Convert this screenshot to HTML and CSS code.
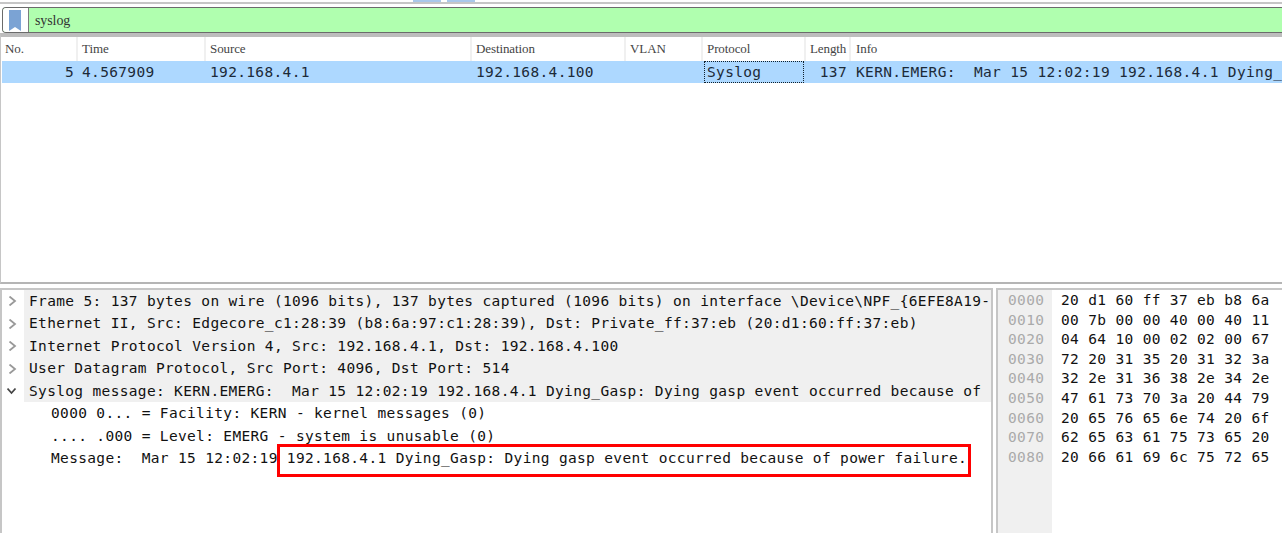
FILE: index.html
```html
<!DOCTYPE html>
<html lang="en">
<head>
<meta charset="utf-8">
<title>Wireshark syslog</title>
<link rel="stylesheet" href="styles.css">
</head>
<body>
<div class="app">
  <div class="topstrip">
    <div class="tabs"><span class="tab"></span><span class="tab"></span></div>
    <div class="topline"></div>
  </div>
  <div class="filter">
    <div class="bookmark">
      <svg class="bm-icon" width="12" height="21" viewBox="0 0 12 21"><path d="M0 0H12V21L6 17L0 21Z" fill="#7ba3d4"/></svg>
    </div>
    <div class="filter-text">syslog</div>
  </div>
  <div class="packets">
    <div class="cols">
      <div class="c c-no">No.</div>
      <div class="c c-time">Time</div>
      <div class="c c-src">Source</div>
      <div class="c c-dst">Destination</div>
      <div class="c c-vlan">VLAN</div>
      <div class="c c-proto">Protocol</div>
      <div class="c c-len">Length</div>
      <div class="c c-info">Info</div>
    </div>
    <div class="row">
      <div class="v c-no num">5</div>
      <div class="v c-time">4.567909</div>
      <div class="v c-src">192.168.4.1</div>
      <div class="v c-dst">192.168.4.100</div>
      <div class="v c-vlan"></div>
      <div class="v c-proto"><div class="focus">Syslog</div></div>
      <div class="v c-len num">137</div>
      <div class="v c-info info-v">KERN.EMERG:  Mar 15 12:02:19 192.168.4.1 Dying_</div>
    </div>
  </div>
  <div class="bottom">
    <div class="tree">
      <div class="t top"><span class="arrow"><svg width="10" height="10" viewBox="0 0 10 10"><path d="M2.5 0.5L8 5L2.5 9.5" class="chev"/></svg></span><span class="tx">Frame 5: 137 bytes on wire (1096 bits), 137 bytes captured (1096 bits) on interface \Device\NPF_{6EFE8A19-</span></div>
      <div class="t top"><span class="arrow"><svg width="10" height="10" viewBox="0 0 10 10"><path d="M2.5 0.5L8 5L2.5 9.5" class="chev"/></svg></span><span class="tx">Ethernet II, Src: Edgecore_c1:28:39 (b8:6a:97:c1:28:39), Dst: Private_ff:37:eb (20:d1:60:ff:37:eb)</span></div>
      <div class="t top"><span class="arrow"><svg width="10" height="10" viewBox="0 0 10 10"><path d="M2.5 0.5L8 5L2.5 9.5" class="chev"/></svg></span><span class="tx">Internet Protocol Version 4, Src: 192.168.4.1, Dst: 192.168.4.100</span></div>
      <div class="t top"><span class="arrow"><svg width="10" height="10" viewBox="0 0 10 10"><path d="M2.5 0.5L8 5L2.5 9.5" class="chev"/></svg></span><span class="tx">User Datagram Protocol, Src Port: 4096, Dst Port: 514</span></div>
      <div class="t top"><span class="arrow"><svg width="10" height="10" viewBox="0 0 10 10"><path d="M0.5 2.5L4.5 7L8.5 2.5" class="chev dark"/></svg></span><span class="tx">Syslog message: KERN.EMERG:  Mar 15 12:02:19 192.168.4.1 Dying_Gasp: Dying gasp event occurred because of</span></div>
      <div class="t sub"><span class="tx">0000 0... = Facility: KERN - kernel messages (0)</span></div>
      <div class="t sub"><span class="tx">.... .000 = Level: EMERG - system is unusable (0)</span></div>
      <div class="t sub"><span class="tx">Message:  Mar 15 12:02:19 192.168.4.1 Dying_Gasp: Dying gasp event occurred because of power failure.</span></div>
      <div class="redbox"></div>
    </div>
    <div class="hex">
      <div class="offsets">
        <div>0000</div><div>0010</div><div>0020</div><div>0030</div><div>0040</div><div>0050</div><div>0060</div><div>0070</div><div>0080</div>
      </div>
      <div class="bytes">
        <div>20 d1 60 ff 37 eb b8 6a</div>
        <div>00 7b 00 00 40 00 40 11</div>
        <div>04 64 10 00 02 02 00 67</div>
        <div>72 20 31 35 20 31 32 3a</div>
        <div>32 2e 31 36 38 2e 34 2e</div>
        <div>47 61 73 70 3a 20 44 79</div>
        <div>20 65 76 65 6e 74 20 6f</div>
        <div>62 65 63 61 75 73 65 20</div>
        <div>20 66 61 69 6c 75 72 65</div>
      </div>
    </div>
  </div>
</div>
</body>
</html>
```
FILE: styles.css
```css
html, body { margin: 0; padding: 0; background: #fff; }
.app { width: 1282px; height: 533px; overflow: hidden; display: flex; flex-direction: column; position: relative; }
.topstrip { height: 7px; flex: none; background: #fff; }
.tabs { height: 2px; display: flex; gap: 6px; padding-left: 413px; }
.tab { width: 28px; height: 2px; background: #a9c8ea; }
.topline { height: 2px; background: #c6c6c6; }
.filter { height: 26px; flex: none; margin-left: 2px; display: flex; box-sizing: border-box; border: 1px solid #6b6b6b; border-right: 0; border-radius: 4px 0 0 4px; background: #b0ffaf; }
.bookmark { width: 26px; flex: none; background: #fff; border-right: 1px solid #7b7b7b; box-sizing: border-box; padding: 2px 0 0 6px; border-radius: 3px 0 0 3px; }
.bm-icon { display: block; }
.filter-text { font: 14px/25px "Liberation Serif", serif; color: #333; padding-left: 6px; letter-spacing: -0.1px; }
.packets { height: 251px; flex: none; box-sizing: border-box; border-top: 4px solid #bdbdbd; border-left: 1px solid #c6c6c6; border-bottom: 2px solid #b5b5b5; }
.cols { display: flex; height: 24px; }
.c { font: 13px/23px "Liberation Serif", serif; color: #444; box-sizing: border-box; padding-left: 4px; border-right: 2px solid #f0f0f0; white-space: nowrap; letter-spacing: -0.1px; }
.c-no { width: 77px; flex: none; }
.c-time { width: 128px; flex: none; }
.c-src { width: 266px; flex: none; }
.c-dst { width: 154px; flex: none; }
.c-vlan { width: 77px; flex: none; }
.c-proto { width: 103px; flex: none; }
.c-len { width: 45px; flex: none; }
.c-info { flex: 1; min-width: 0; border-right: 0; padding-left: 5px; }
.row { display: flex; height: 22px; background: #add8ff; margin-left: 1px; overflow: hidden; }
.row .c-no { width: 76px; }
.v { font: 14.5px/22px "DejaVu Sans Mono", monospace; letter-spacing: 0.34px; color: #1c2a38; box-sizing: border-box; padding-left: 4px; white-space: pre; }
.v.c-proto { padding-left: 1px; }
.info-v { padding-left: 5px; }
.num { text-align: right; padding-right: 4px; }
.focus { border: 1px dotted #10202c; line-height: 20px; padding-left: 2px; width: 100px; box-sizing: border-box; }
.bottom { flex: 1; display: flex; margin-top: 4px; min-height: 0; }
.tree { width: 993px; flex: none; box-sizing: border-box; border-top: 2px solid #c6c6c6; border-left: 2px solid #c6c6c6; border-right: 2px solid #c6c6c6; position: relative; overflow: hidden; }
.t { height: 22.45px; display: flex; align-items: center; font: 14.5px "DejaVu Sans Mono", monospace; letter-spacing: 0.34px; color: #111; white-space: pre; }
.top .tx { background: #f0f0f0; flex: 1; line-height: 22.45px; padding-left: 5px; overflow: hidden; }
.arrow { width: 22px; flex: none; display: flex; align-items: center; padding-left: 5px; box-sizing: border-box; }
.chev { fill: none; stroke: #999; stroke-width: 1.8; }
.chev.dark { stroke: #444; }
.sub { padding-left: 49px; }
.redbox { position: absolute; left: 275px; top: 154px; width: 694px; height: 33px; box-sizing: border-box; border: 3px solid #f00; }
.hex { flex: 1; display: flex; margin-left: 3px; box-sizing: border-box; border-top: 2px solid #c6c6c6; border-left: 2px solid #c6c6c6; font: 14.5px/19.6px "DejaVu Sans Mono", monospace; letter-spacing: 0.34px; }
.offsets { width: 54px; flex: none; background: #f0f0f0; color: #aaa; padding: 1px 0 0 10px; box-sizing: border-box; }
.bytes { padding: 1px 0 0 9px; color: #111; }
.bytes div { white-space: pre; }
```
